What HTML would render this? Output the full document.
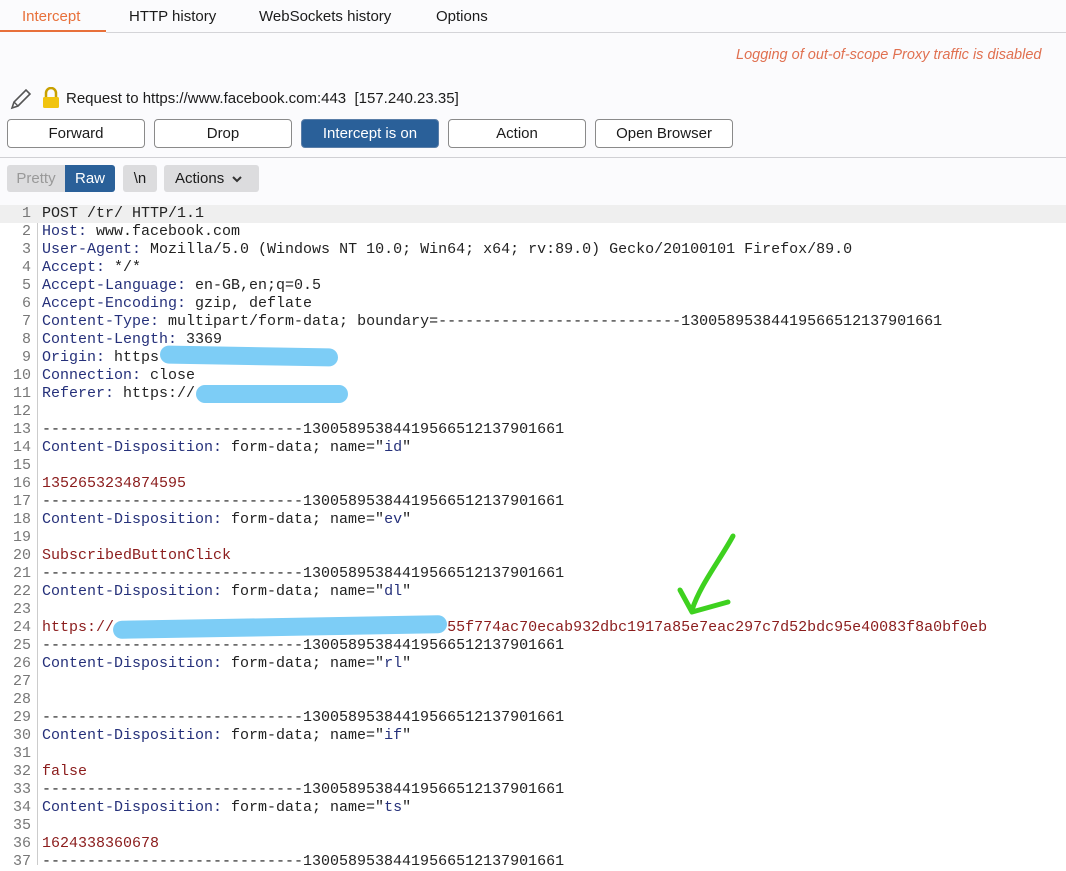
<!DOCTYPE html>
<html><head><meta charset="utf-8"><style>
*{margin:0;padding:0;box-sizing:border-box}
body{width:1066px;height:858px;overflow:hidden;background:#fbfbfd;font-family:"Liberation Sans",sans-serif;position:relative;color:#1b1b1b}
.tab{position:absolute;top:8px;font-size:15px}
.btn{position:absolute;top:119px;height:29px;width:138px;border:1px solid #8a8a8a;border-radius:4px;background:#fff;font-size:15px;text-align:center;line-height:28px}
.code{position:absolute;left:0;top:205px;width:1066px;font-family:"Liberation Mono",monospace;font-size:15px;line-height:18px;background:#fff;color:#222}
.ln{display:block;height:18px;white-space:pre;position:relative}
.n{display:inline-block;width:31px;text-align:right;color:#777;margin-right:11px}
.k{color:#25307a}.r{color:#8b1c1c}
.blob{position:absolute;background:#7dcdf6;border-radius:10px}
</style></head><body>
<div class="tab" style="left:22px;color:#e8703a">Intercept</div>
<div style="position:absolute;left:0;top:30px;width:106px;height:2px;background:#e8703a"></div>
<div class="tab" style="left:129px">HTTP history</div>
<div class="tab" style="left:259px">WebSockets history</div>
<div class="tab" style="left:436px">Options</div>
<div style="position:absolute;left:106px;top:32px;width:960px;height:1px;background:#d4d4d8"></div>
<div style="position:absolute;left:736px;top:47px;font-size:14.5px;font-style:italic;color:#e07050">Logging of out-of-scope Proxy traffic is disabled</div>
<svg style="position:absolute;left:9px;top:87px" width="24" height="24" viewBox="0 0 24 24"><path d="M3 21l2-6L17 3l4 4L9 19z" fill="none" stroke="#555" stroke-width="1.6"/><path d="M5 15l4 4" stroke="#555" stroke-width="1.3"/></svg>
<svg style="position:absolute;left:41px;top:87px" width="20" height="22" viewBox="0 0 20 22"><path d="M5 10V6a5 5 0 0 1 10 0v4" fill="none" stroke="#c8a000" stroke-width="2.5"/><rect x="2" y="10" width="16" height="11" rx="1.5" fill="#f1c40f"/></svg>
<div style="position:absolute;left:66px;top:90px;font-size:15px">Request to https://www.facebook.com:443&nbsp; [157.240.23.35]</div>
<div class="btn" style="left:7px">Forward</div>
<div class="btn" style="left:154px">Drop</div>
<div class="btn" style="left:301px;background:#2a6099;color:#fff;border-color:#5a7ea8">Intercept is on</div>
<div class="btn" style="left:448px">Action</div>
<div class="btn" style="left:595px">Open Browser</div>
<div style="position:absolute;left:0;top:157px;width:1066px;height:1px;background:#d0d0d4"></div>
<div style="position:absolute;left:7px;top:165px;width:58px;height:27px;background:#dcdcde;border-radius:3px 0 0 3px;color:#999;font-size:15px;text-align:center;line-height:28px">Pretty</div>
<div style="position:absolute;left:65px;top:165px;width:50px;height:27px;background:#2a6099;color:#fff;font-size:15px;text-align:center;line-height:28px;border-radius:0 3px 3px 0">Raw</div>
<div style="position:absolute;left:123px;top:165px;width:34px;height:27px;background:#dcdcde;border-radius:3px;font-size:15px;text-align:center;line-height:28px">\n</div>
<div style="position:absolute;left:164px;top:165px;width:95px;height:27px;background:#dcdcde;border-radius:3px;font-size:15px;line-height:28px;padding-left:11px">Actions <svg width="12" height="8" viewBox="0 0 12 8" style="margin-left:3px"><path d="M2 2l4 4 4-4" fill="none" stroke="#333" stroke-width="2"/></svg></div>
<div class="code">
<div style="position:absolute;left:37px;top:0;width:1px;height:660px;background:#ccc"></div>
<span class="ln" style="background:#efefef"><span class="n">1</span>POST /tr/ HTTP/1.1</span>
<span class="ln"><span class="n">2</span><span class="k">Host:</span> www.facebook.com</span>
<span class="ln"><span class="n">3</span><span class="k">User-Agent:</span> Mozilla/5.0 (Windows NT 10.0; Win64; x64; rv:89.0) Gecko/20100101 Firefox/89.0</span>
<span class="ln"><span class="n">4</span><span class="k">Accept:</span> */*</span>
<span class="ln"><span class="n">5</span><span class="k">Accept-Language:</span> en-GB,en;q=0.5</span>
<span class="ln"><span class="n">6</span><span class="k">Accept-Encoding:</span> gzip, deflate</span>
<span class="ln"><span class="n">7</span><span class="k">Content-Type:</span> multipart/form-data; boundary=---------------------------13005895384419566512137901661</span>
<span class="ln"><span class="n">8</span><span class="k">Content-Length:</span> 3369</span>
<span class="ln"><span class="n">9</span><span class="k">Origin:</span> https</span>
<span class="ln"><span class="n">10</span><span class="k">Connection:</span> close</span>
<span class="ln"><span class="n">11</span><span class="k">Referer:</span> https://</span>
<span class="ln"><span class="n">12</span></span>
<span class="ln"><span class="n">13</span>-----------------------------13005895384419566512137901661</span>
<span class="ln"><span class="n">14</span><span class="k">Content-Disposition:</span> form-data; name="<span class="k">id</span>"</span>
<span class="ln"><span class="n">15</span></span>
<span class="ln"><span class="n">16</span><span class="r">1352653234874595</span></span>
<span class="ln"><span class="n">17</span>-----------------------------13005895384419566512137901661</span>
<span class="ln"><span class="n">18</span><span class="k">Content-Disposition:</span> form-data; name="<span class="k">ev</span>"</span>
<span class="ln"><span class="n">19</span></span>
<span class="ln"><span class="n">20</span><span class="r">SubscribedButtonClick</span></span>
<span class="ln"><span class="n">21</span>-----------------------------13005895384419566512137901661</span>
<span class="ln"><span class="n">22</span><span class="k">Content-Disposition:</span> form-data; name="<span class="k">dl</span>"</span>
<span class="ln"><span class="n">23</span></span>
<span class="ln"><span class="n">24</span><span class="r">https://                                     55f774ac70ecab932dbc1917a85e7eac297c7d52bdc95e40083f8a0bf0eb</span></span>
<span class="ln"><span class="n">25</span>-----------------------------13005895384419566512137901661</span>
<span class="ln"><span class="n">26</span><span class="k">Content-Disposition:</span> form-data; name="<span class="k">rl</span>"</span>
<span class="ln"><span class="n">27</span></span>
<span class="ln"><span class="n">28</span></span>
<span class="ln"><span class="n">29</span>-----------------------------13005895384419566512137901661</span>
<span class="ln"><span class="n">30</span><span class="k">Content-Disposition:</span> form-data; name="<span class="k">if</span>"</span>
<span class="ln"><span class="n">31</span></span>
<span class="ln"><span class="n">32</span><span class="r">false</span></span>
<span class="ln"><span class="n">33</span>-----------------------------13005895384419566512137901661</span>
<span class="ln"><span class="n">34</span><span class="k">Content-Disposition:</span> form-data; name="<span class="k">ts</span>"</span>
<span class="ln"><span class="n">35</span></span>
<span class="ln"><span class="n">36</span><span class="r">1624338360678</span></span>
<span class="ln"><span class="n">37</span>-----------------------------13005895384419566512137901661</span>
</div>
<div class="blob" style="left:160px;top:347px;width:178px;height:18px;transform:rotate(1deg)"></div>
<div class="blob" style="left:196px;top:385px;width:152px;height:18px"></div>
<div class="blob" style="left:113px;top:618px;width:334px;height:18px;transform:rotate(-1deg)"></div>
<svg style="position:absolute;left:670px;top:530px" width="80" height="90" viewBox="0 0 80 90"><path d="M63 6C50 30 30 55 22 80M10 60l12 22 36-10" fill="none" stroke="#3ed11f" stroke-width="5" stroke-linecap="round" stroke-linejoin="round"/></svg>
</body></html>
